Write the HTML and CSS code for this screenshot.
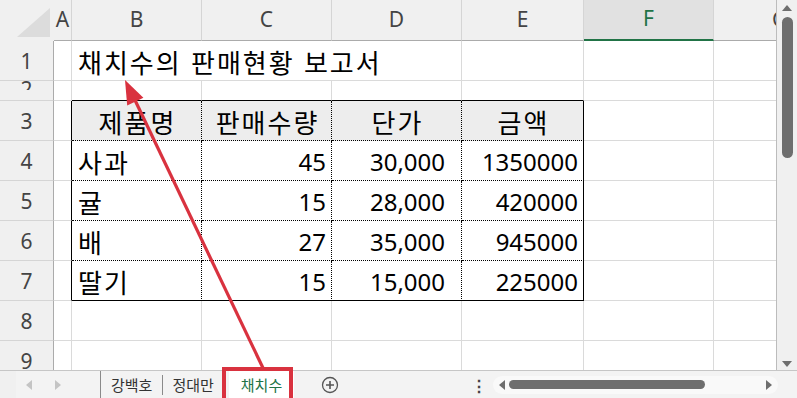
FILE: index.html
```html
<!DOCTYPE html>
<html lang="ko">
<head>
    <meta charset="UTF-8">
    <meta name="viewport" content="width=device-width, initial-scale=1.0">
    <title>채치수</title>
    <link rel="stylesheet" href="styles.css">
</head>
<body>
    <div class="app">
        <div class="main">
            <div class="sheet">
                <!-- column headers -->
                <div class="corner">
                    <svg width="54" height="41"><polygon points="17,37 50,37 50,8" fill="#dcdcdc"/></svg>
                </div>
                <div class="ch">A</div>
                <div class="ch">B</div>
                <div class="ch">C</div>
                <div class="ch">D</div>
                <div class="ch">E</div>
                <div class="ch sel">F</div>
                <div class="ch last"><span class="cut">G</span></div>

                <!-- row 1 -->
                <div class="rh">1</div>
                <div class="c"></div>
                <div class="c title">채치수의 판매현황 보고서</div>
                <div class="c"></div>
                <div class="c"></div>
                <div class="c last"></div>

                <!-- row 2 -->
                <div class="rh"><span class="half">2</span></div>
                <div class="c"></div>
                <div class="c top"></div>
                <div class="c top"></div>
                <div class="c top"></div>
                <div class="c top"></div>
                <div class="c"></div>
                <div class="c last"></div>

                <!-- row 3 -->
                <div class="rh">3</div>
                <div class="c edge"></div>
                <div class="c t th">제품명</div>
                <div class="c t th">판매수량</div>
                <div class="c t th">단가</div>
                <div class="c t th end">금액</div>
                <div class="c"></div>
                <div class="c last"></div>

                <!-- row 4 -->
                <div class="rh">4</div>
                <div class="c edge"></div>
                <div class="c t">사과</div>
                <div class="c t num">45</div>
                <div class="c t num won">30,000</div>
                <div class="c t num end">1350000</div>
                <div class="c"></div>
                <div class="c last"></div>

                <!-- row 5 -->
                <div class="rh">5</div>
                <div class="c edge"></div>
                <div class="c t">귤</div>
                <div class="c t num">15</div>
                <div class="c t num won">28,000</div>
                <div class="c t num end">420000</div>
                <div class="c"></div>
                <div class="c last"></div>

                <!-- row 6 -->
                <div class="rh">6</div>
                <div class="c edge"></div>
                <div class="c t">배</div>
                <div class="c t num">27</div>
                <div class="c t num won">35,000</div>
                <div class="c t num end">945000</div>
                <div class="c"></div>
                <div class="c last"></div>

                <!-- row 7 -->
                <div class="rh">7</div>
                <div class="c edge"></div>
                <div class="c t bottom">딸기</div>
                <div class="c t num bottom">15</div>
                <div class="c t num won bottom">15,000</div>
                <div class="c t num end bottom">225000</div>
                <div class="c"></div>
                <div class="c last"></div>

                <!-- row 8 -->
                <div class="rh">8</div>
                <div class="c"></div>
                <div class="c"></div>
                <div class="c"></div>
                <div class="c"></div>
                <div class="c"></div>
                <div class="c"></div>
                <div class="c last"></div>

                <!-- row 9 -->
                <div class="rh">9</div>
                <div class="c"></div>
                <div class="c"></div>
                <div class="c"></div>
                <div class="c"></div>
                <div class="c"></div>
                <div class="c"></div>
                <div class="c last"></div>
            </div>

            <div class="vscroll">
                <span class="tri up"></span>
                <div class="vthumb"></div>
                <span class="tri down"></span>
            </div>
        </div>

        <div class="tabbar">
            <div class="nav">
                <span class="tri left light"></span>
                <span class="tri right light"></span>
            </div>
            <div class="tab">강백호</div>
            <div class="tab">정대만</div>
            <div class="tab active">채치수</div>
            <div class="add">
                <svg width="18" height="18" viewBox="0 0 18 18">
                    <circle cx="9" cy="9" r="7.5" fill="none" stroke="#555" stroke-width="1.3"/>
                    <path d="M9 5v8M5 9h8" stroke="#555" stroke-width="1.6"/>
                </svg>
            </div>
            <div class="dots">⋮</div>
            <div class="hscroll">
                <span class="tri left"></span>
                <div class="hthumb"></div>
                <span class="tri right"></span>
            </div>
        </div>

        <!-- annotation -->
        <svg class="arrow" width="797" height="398">
            <line x1="263" y1="368" x2="133" y2="96" stroke="#d9323f" stroke-width="3.2"/>
            <polygon points="125,80 143.4,97.8 127.2,105.6" fill="#d9323f"/>
        </svg>
        <div class="mark"></div>
    </div>
</body>
</html>
```

FILE: styles.css
```css
* {
    margin: 0;
    padding: 0;
    box-sizing: border-box;
}
body {
    width: 797px;
    height: 398px;
    overflow: hidden;
    background: #fff;
    font-family: "Noto Sans", "Noto Sans CJK KR", sans-serif;
    color: #000;
}
.app {
    position: relative;
    width: 797px;
    height: 398px;
    display: flex;
    flex-direction: column;
}
.main {
    display: flex;
    height: 370px;
}

/* grid */
.sheet {
    width: 776px;
    height: 370px;
    overflow: hidden;
    display: grid;
    grid-template-columns: 54px 18px 130px 130px 130px 122px 130px 62px;
    grid-template-rows: 41px 40px 20px repeat(7, 40px);
}
.corner {
    background: #f0f0f0;
}
.corner svg {
    display: block;
}
.ch {
    background: #f0f0f0;
    border-right: 1px solid #d5d5d5;
    border-bottom: 1px solid #ababab;
    display: flex;
    align-items: center;
    justify-content: center;
    font-size: 21px;
    color: #444;
    padding-bottom: 3px;
}
.ch.sel {
    background: #e1e1e1;
    border-bottom: 2px solid #217346;
    color: #217346;
}
.ch.last {
    border-right: none;
    justify-content: flex-start;
    overflow: hidden;
}
.ch .cut {
    padding-left: 58px;
}
.rh {
    background: #f0f0f0;
    border-right: 1px solid #ababab;
    border-bottom: 1px solid #d5d5d5;
    display: flex;
    align-items: center;
    justify-content: center;
    font-size: 21px;
    color: #444;
    overflow: hidden;
}
.rh .half {
    display: block;
    height: 9px;
    line-height: 16px;
    overflow: hidden;
    align-self: flex-start;
}
.c {
    border-right: 1px solid #dadada;
    border-bottom: 1px solid #dadada;
    display: flex;
    align-items: center;
    font-family: "Noto Sans CJK KR", sans-serif;
    font-size: 26px;
    letter-spacing: 2px;
    white-space: nowrap;
    padding: 1px 6px 0;
}
.c.last {
    border-right: none;
}
.title {
    grid-column: span 3;
    word-spacing: 0;
}

/* table */
.c.top {
    border-bottom: 1px solid #000;
}
.c.edge {
    border-right: 1px solid #000;
}
.t {
    border-right: 1px dotted #000;
    border-bottom: 1px dotted #000;
}
.t.th {
    background: #ededed;
    justify-content: center;
    padding-left: 8px;
}
.t.num {
    font-family: "Noto Sans", sans-serif;
    font-size: 24px;
    letter-spacing: 0;
    justify-content: flex-end;
    padding: 2px 5px 0 0;
}
.t.won {
    padding-right: 16px;
}
.t.end {
    border-right: 1px solid #000;
}
.t.bottom {
    border-bottom: 1px solid #000;
}

/* scroll bars */
.tri {
    display: block;
    width: 0;
    height: 0;
    border: 5px solid transparent;
}
.tri.up {
    border-top: none;
    border-bottom: 6px solid #6e6e6e;
}
.tri.down {
    border-bottom: none;
    border-top: 6px solid #6e6e6e;
}
.tri.left {
    border-left: none;
    border-right: 6px solid #6e6e6e;
}
.tri.right {
    border-right: none;
    border-left: 6px solid #6e6e6e;
}
.tri.light.left {
    border-right-color: #c4c4c4;
}
.tri.light.right {
    border-left-color: #c4c4c4;
}
.vscroll {
    width: 21px;
    background: #f0f0f0;
    border-left: 1px solid #bcbcbc;
    display: flex;
    flex-direction: column;
    align-items: center;
    padding-top: 5px;
}
.vthumb {
    width: 11px;
    height: 141px;
    margin-top: 6px;
    border-radius: 6px;
    background: #6e6e6e;
}
.vscroll .down {
    margin-top: auto;
    margin-bottom: 3px;
}

/* sheet tabs */
.tabbar {
    height: 28px;
    background: #f3f3f3;
    border-top: 1px solid #c6c6c6;
    display: flex;
    align-items: center;
    font-family: "Noto Sans CJK KR", sans-serif;
    font-size: 15px;
    color: #333;
}
.nav {
    width: 101px;
    height: 100%;
    display: flex;
    align-items: center;
    gap: 23px;
    padding-left: 26px;
    border-right: 1px solid #8a8a8a;
    background: linear-gradient(#f3f3f3, #f3f3f3) no-repeat 16px 0 / 85px 100%, #f0f0f0;
}
.tab {
    padding: 0 10px;
    height: 20px;
    line-height: 20px;
}
.tab + .tab {
    border-left: 1px solid #8a8a8a;
    padding: 0 12px 0 9px;
}
.tab.active {
    border-left: none;
    margin-left: 3px;
    height: 27px;
    line-height: 27px;
    padding: 0 12px;
    background: #fff;
    color: #217346;
}
.add {
    margin-left: 27px;
    display: flex;
}
.dots {
    margin-left: 132px;
    font-size: 16px;
    font-weight: bold;
    color: #444;
    width: 22px;
}
.hscroll {
    width: 285px;
    height: 18px;
    border-radius: 9px;
    background: #f9f9f9;
    display: flex;
    align-items: center;
    padding: 0 6px;
}
.hthumb {
    width: 196px;
    height: 9px;
    margin-left: 4px;
    border-radius: 5px;
    background: #6e6e6e;
}
.hscroll .right {
    margin-left: auto;
}

/* annotation */
.arrow {
    position: absolute;
    left: 0;
    top: 0;
    pointer-events: none;
}
.mark {
    position: absolute;
    left: 222px;
    top: 367px;
    width: 71px;
    height: 36px;
    border: 4px solid #d9323f;
}
```
